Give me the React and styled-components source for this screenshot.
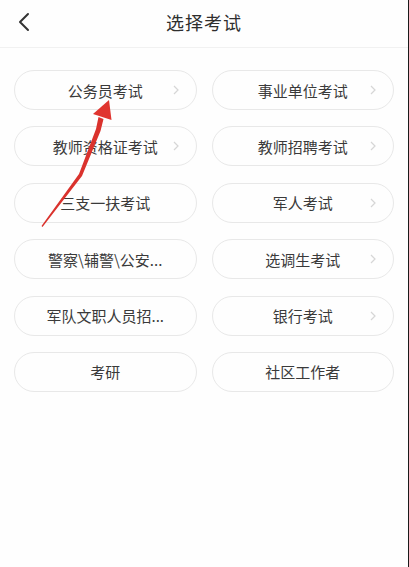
import React from "react";
import styled, { createGlobalStyle } from "styled-components";

const GlobalStyle = createGlobalStyle`
  html, body {
    margin: 0;
    padding: 0;
    background: #ffffff;
  }
  body {
    font-family: "Noto Sans CJK SC", "Noto Sans", sans-serif;
  }
`;

const Page = styled.div`
  position: relative;
  width: 409px;
  height: 567px;
  background: #fefefe;
  border-right: 1px solid #1a1a1a;
  box-sizing: border-box;
  overflow: hidden;
`;

const Header = styled.div`
  position: relative;
  height: 47px;
  display: flex;
  align-items: center;
  justify-content: center;
  border-bottom: 1px solid #f1f1f1;
`;

const Back = styled.button`
  position: absolute;
  left: 12px;
  top: 10px;
  width: 24px;
  height: 24px;
  padding: 0;
  border: 0;
  background: none;
  display: flex;
  align-items: center;
  justify-content: center;
`;

const Title = styled.h1`
  margin: 0;
  margin-top: -4px;
  font-size: 18px;
  font-weight: 400;
  color: #2e2e2e;
  letter-spacing: 1px;
`;

const Grid = styled.div`
  display: grid;
  grid-template-columns: 1fr 1fr;
  column-gap: 15px;
  row-gap: 16.4px;
  padding: 22px 14px 0 14px;
`;

const Pill = styled.div`
  position: relative;
  height: 40px;
  border: 1px solid #e8e8e8;
  border-radius: 20px;
  box-sizing: border-box;
  display: flex;
  align-items: center;
  justify-content: center;
  font-size: 15px;
  color: #3a3a3a;
  white-space: nowrap;
`;

const Chevron = styled.svg`
  position: absolute;
  right: 17px;
  top: 50%;
  margin-top: -5px;
`;

const Annotation = styled.svg`
  position: absolute;
  left: 0;
  top: 0;
  pointer-events: none;
`;

const exams = [
  { name: "公务员考试", arrow: true },
  { name: "事业单位考试", arrow: true },
  { name: "教师资格证考试", arrow: true },
  { name: "教师招聘考试", arrow: true },
  { name: "三支一扶考试", arrow: false },
  { name: "军人考试", arrow: true },
  { name: "警察\\辅警\\公安...", arrow: false },
  { name: "选调生考试", arrow: true },
  { name: "军队文职人员招...", arrow: false },
  { name: "银行考试", arrow: true },
  { name: "考研", arrow: false },
  { name: "社区工作者", arrow: false },
];

export default function App() {
  return (
    <>
      <GlobalStyle />
      <Page>
        <Header>
          <Back aria-label="返回">
            <svg width="14" height="20" viewBox="0 0 14 20">
              <path
                d="M11 2 L3 10 L11 18"
                fill="none"
                stroke="#333"
                strokeWidth="2"
                strokeLinecap="round"
                strokeLinejoin="round"
              />
            </svg>
          </Back>
          <Title>选择考试</Title>
        </Header>
        <Grid>
          {exams.map((item) => (
            <Pill key={item.name}>
              {item.name}
              {item.arrow && (
                <Chevron width="6" height="10" viewBox="0 0 6 10">
                  <path
                    d="M1 1 L5 5 L1 9"
                    fill="none"
                    stroke="#d6d6d6"
                    strokeWidth="1.2"
                  />
                </Chevron>
              )}
            </Pill>
          ))}
        </Grid>
        <Annotation width="409" height="567" viewBox="0 0 409 567">
          <path
            d="M41.5 226 L79 174 L96 129 L98.5 117 L103.5 119 L100.5 131 L82 176 L42.5 227 Z"
            fill="#da322d"
          />
          <path d="M109 100 L93 114 L111.5 120 Z" fill="#e0352f" />
        </Annotation>
      </Page>
    </>
  );
}
